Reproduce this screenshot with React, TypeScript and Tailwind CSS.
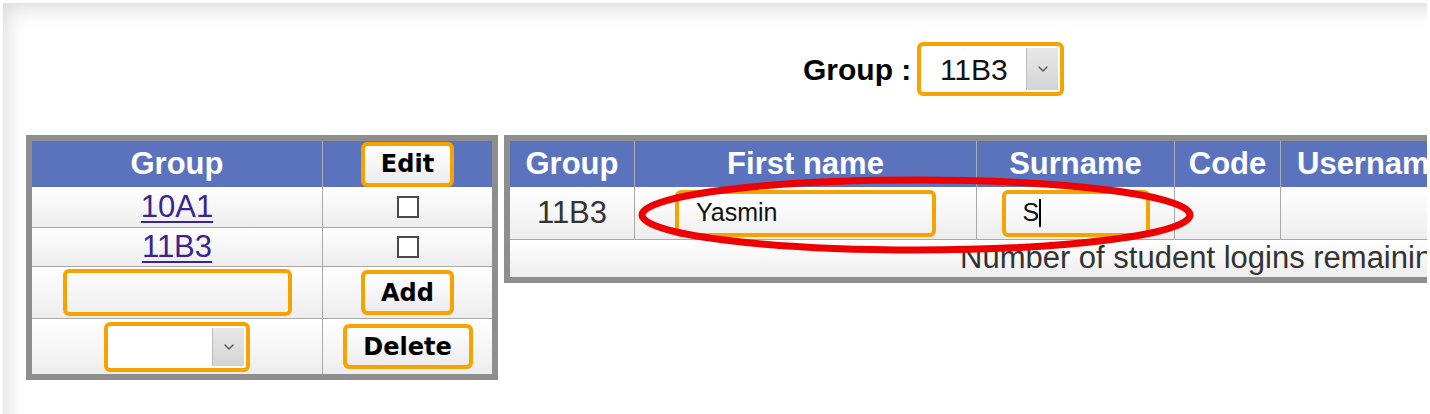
import { ChevronDown } from 'lucide-react';

const arial = { fontFamily: '"Liberation Sans", Arial, sans-serif' };
const verdana = { fontFamily: '"DejaVu Sans", Verdana, sans-serif' };

function OrangeButton({ label, w }: { label: string; w: string }) {
  return (
    <div className={`${w} h-[45px] rounded-md border-4 border-[#f6a300] bg-[#f6a300] flex`}>
      <div
        className="flex-1 rounded-[3px] bg-gradient-to-b from-white to-[#ececec] flex items-center justify-center text-[24px] font-bold text-black"
        style={verdana}
      >
        {label}
      </div>
    </div>
  );
}

function Checkbox() {
  return <div className="w-[22px] h-[22px] border-2 border-[#4a4a4a] bg-white" />;
}

function SelectBox({ value, w, h }: { value: string; w: string; h: string }) {
  return (
    <div className={`${w} ${h} rounded-md border-4 border-[#f6a300] bg-white flex overflow-hidden`}>
      <div className="flex-1 flex items-center justify-center text-[30px] text-[#111]" style={arial}>
        {value}
      </div>
      <div className="w-[32px] my-[2px] mr-[2px] bg-gradient-to-b from-[#e8e8e8] to-[#d4d4d4] border-l border-[#bdbdbd] flex items-center justify-center">
        <ChevronDown className="w-4 h-4 text-[#555]" strokeWidth={2} />
      </div>
    </div>
  );
}

const cell = 'bg-gradient-to-b from-white to-[#ededed] flex items-center justify-center border-[#a8a8a8]';
const head = 'bg-[#5b73bd] text-white font-bold text-[31px] flex items-center justify-center border-[#a9adb8]';

export default function App() {
  return (
    <div className="w-[1430px] h-[414px] bg-white overflow-hidden" style={arial}>
      <div className="relative mt-[3px] ml-[3px] w-[1424px] h-[411px] overflow-hidden shadow-[inset_12px_14px_22px_-10px_rgba(0,0,0,0.16)]">
        <div className="flex items-center gap-[6px] mt-[39px] ml-[800px]">
          <span className="text-[30px] font-bold text-black">Group :</span>
          <SelectBox value="11B3" w="w-[147px]" h="h-[54px]" />
        </div>

        <div className="flex items-start gap-[6px] mt-[39px] ml-[23px]">
          <div className="w-[472px] border-[6px] border-[#8e8e8e] grid grid-cols-[291px_169px] grid-rows-[46px_41px_39px_52px_55px]">
            <div className={`${head} border-r`}>Group</div>
            <div className={head}>
              <OrangeButton label="Edit" w="w-[93px]" />
            </div>
            <div className={`${cell} border-r border-b text-[31px]`}>
              <a className="text-[#3b2490] underline underline-offset-4 decoration-2">10A1</a>
            </div>
            <div className={`${cell} border-b`}>
              <Checkbox />
            </div>
            <div className={`${cell} border-r border-b text-[31px]`}>
              <a className="text-[#3b2490] underline underline-offset-4 decoration-2">11B3</a>
            </div>
            <div className={`${cell} border-b`}>
              <Checkbox />
            </div>
            <div className={`${cell} border-r border-b`}>
              <div className="w-[229px] h-[47px] rounded-md border-4 border-[#f6a300] bg-gradient-to-b from-[#fafafa] to-[#f0f0f0]" />
            </div>
            <div className={`${cell} border-b`}>
              <OrangeButton label="Add" w="w-[93px]" />
            </div>
            <div className={`${cell} border-r`}>
              <SelectBox value="" w="w-[146px]" h="h-[50px]" />
            </div>
            <div className={cell}>
              <OrangeButton label="Delete" w="w-[130px]" />
            </div>
          </div>

          <div className="shrink-0 border-[6px] border-[#8e8e8e] grid grid-cols-[125px_342px_198px_106px_240px] grid-rows-[46px_53px_37px]">
            <div className={`${head} border-r`}>Group</div>
            <div className={`${head} border-r`}>First name</div>
            <div className={`${head} border-r`}>Surname</div>
            <div className={`${head} border-r`}>Code</div>
            <div className={`${head} justify-start pl-[16px] whitespace-nowrap`}>Username</div>

            <div className={`${cell} border-r border-b text-[31px] text-[#333]`}>11B3</div>
            <div className={`${cell} border-r border-b`}>
              <div className="w-[261px] h-[47px] rounded-md border-4 border-[#f6a300] bg-gradient-to-b from-white to-[#f1f1f1] flex items-center pl-[17px] text-[25px] text-[#111]">
                Yasmin
              </div>
            </div>
            <div className={`${cell} border-r border-b`}>
              <div className="w-[148px] h-[47px] rounded-md border-4 border-[#f6a300] bg-gradient-to-b from-white to-[#f1f1f1] flex items-center pl-[17px] text-[25px] text-[#111]">
                S<span className="inline-block w-[2px] h-[28px] bg-black" />
              </div>
            </div>
            <div className={`${cell} border-r border-b`} />
            <div className={`${cell} border-b`} />

            <div className={`${cell} col-span-5 justify-start pl-[450px] text-[31px] text-[#333] whitespace-nowrap`}>
              Number of student logins remaining
            </div>
          </div>
        </div>

        <svg className="absolute left-0 top-0 pointer-events-none" width="1424" height="411">
          <ellipse cx="913" cy="212" rx="274" ry="35" fill="none" stroke="#ee0000" strokeWidth="7" />
        </svg>
      </div>
    </div>
  );
}
